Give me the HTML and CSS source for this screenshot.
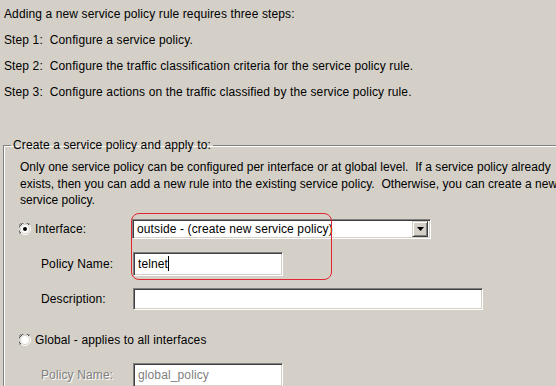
FILE: index.html
```html
<!DOCTYPE html>
<html>
<head>
<meta charset="utf-8">
<link rel="stylesheet" href="styles.css">
</head>
<body>
<div class="page">
  <div class="intro">
    <p>Adding a new service policy rule requires three steps:</p>
    <p>Step 1:&nbsp; Configure a service policy.</p>
    <p>Step 2:&nbsp; Configure the traffic classification criteria for the service policy rule.</p>
    <p>Step 3:&nbsp; Configure actions on the traffic classified by the service policy rule.</p>
  </div>
  <fieldset class="group">
    <legend class="group-title">Create a service policy and apply to:</legend>
    <p class="note">Only one service policy can be configured per interface or at global level.&nbsp; If a service policy already<br>exists, then you can add a new rule into the existing service policy.&nbsp; Otherwise, you can create a new<br>service policy.</p>
    <div class="form">
      <div class="highlight"></div>
      <div class="row row-iface">
        <label class="radio-label">
          <svg class="radio" width="12" height="12" viewBox="0 0 12 12">
            <circle cx="6" cy="6" r="5.5" fill="none" stroke="#ffffff"/>
            <path d="M1.2 10.8 A5.5 5.5 0 0 1 1.2 1.2 A5.5 5.5 0 0 1 10.8 1.2" fill="none" stroke="#808080"/>
            <path d="M2 10 A4.5 4.5 0 0 1 2 2 A4.5 4.5 0 0 1 10 2" fill="none" stroke="#404040"/>
            <circle cx="6" cy="6" r="4" fill="#ffffff"/>
            <circle cx="6" cy="6" r="2" fill="#000000"/>
          </svg>
          <span>Interface:</span>
        </label>
        <div class="select">
          <span class="select-text">outside - (create new service policy)</span>
          <span class="select-btn">
            <svg width="7" height="4" viewBox="0 0 7 4"><path d="M0 0H7L3.5 4Z" fill="#000"/></svg>
          </span>
        </div>
      </div>
      <div class="row row-name">
        <span class="label">Policy Name:</span>
        <div class="field field-short"><span>telnet</span><span class="caret"></span></div>
      </div>
      <div class="row row-desc">
        <span class="label">Description:</span>
        <div class="field field-long"></div>
      </div>
      <div class="row row-global">
        <label class="radio-label">
          <svg class="radio" width="12" height="12" viewBox="0 0 12 12">
            <circle cx="6" cy="6" r="5.5" fill="none" stroke="#ffffff"/>
            <path d="M1.2 10.8 A5.5 5.5 0 0 1 1.2 1.2 A5.5 5.5 0 0 1 10.8 1.2" fill="none" stroke="#808080"/>
            <path d="M2 10 A4.5 4.5 0 0 1 2 2 A4.5 4.5 0 0 1 10 2" fill="none" stroke="#404040"/>
            <circle cx="6" cy="6" r="4" fill="#ffffff"/>
          </svg>
          <span>Global - applies to all interfaces</span>
        </label>
      </div>
      <div class="row row-gname">
        <span class="label disabled">Policy Name:</span>
        <div class="field field-short field-disabled"><span>global_policy</span></div>
      </div>
    </div>
  </fieldset>
</div>
</body>
</html>
```

FILE: styles.css
```css
html, body {
  margin: 0;
  padding: 0;
  background: #d4d0c8;
  overflow: hidden;
}
body {
  font-family: "Liberation Sans", Arial, sans-serif;
  font-size: 12px;
  letter-spacing: 0.12px;
  color: #000;
}
.page {
  width: 620px;
  padding-left: 4px;
}
.intro {
  display: flex;
  flex-direction: column;
  gap: 11px;
  padding-top: 7px;
}
.intro p {
  margin: 0;
  line-height: 15px;
  white-space: nowrap;
}
.group {
  margin: 38px 0 0 -1px;
  padding: 6px 0 40px 16px;
  border: 1px solid #808080;
  box-shadow: inset 1px 1px 0 #ffffff, 1px 1px 0 #ffffff;
  width: 640px;
}
.group-title {
  padding: 0 2px;
  margin-left: -9px;
  line-height: 15px;
}
.note {
  margin: 0;
  line-height: 16.5px;
  letter-spacing: 0.03px;
  white-space: pre;
}
.form {
  position: relative;
  margin-top: 10px;
}
.highlight {
  position: absolute;
  left: 111px;
  top: -6px;
  width: 199px;
  height: 65px;
  border: 1px solid #e0262e;
  border-radius: 8px;
  pointer-events: none;
}
.row {
  display: flex;
  align-items: center;
}
.row-iface { height: 20px; }
.row-name { height: 24px; margin-top: 13px; }
.row-desc { height: 22px; margin-top: 12px; }
.row-global { height: 16px; margin-top: 22px; }
.row-gname { height: 24px; margin-top: 15px; }

.radio-label {
  display: flex;
  align-items: center;
  width: 113px;
  margin-left: -1px;
}
.radio {
  margin-right: 4px;
  flex: none;
}
.row-global .radio-label { width: auto; }
.label {
  width: 92px;
  padding-left: 21px;
}
.label.disabled {
  color: #808080;
  text-shadow: 1px 1px 0 #ffffff;
}
.select, .field {
  box-sizing: border-box;
  background: #ffffff;
  border-top: 1px solid #808080;
  border-left: 1px solid #808080;
  border-right: 1px solid #ffffff;
  border-bottom: 1px solid #ffffff;
  box-shadow: inset 1px 1px 0 #404040, inset -1px -1px 0 #d4d0c8;
  display: flex;
  align-items: center;
}
.select {
  width: 299px;
  height: 20px;
  padding: 2px 2px 2px 4px;
}
.select-text {
  flex: 1;
}
.select-btn {
  box-sizing: border-box;
  width: 16px;
  height: 16px;
  background: #d4d0c8;
  border-top: 1px solid #d4d0c8;
  border-left: 1px solid #d4d0c8;
  border-right: 1px solid #404040;
  border-bottom: 1px solid #404040;
  box-shadow: inset 1px 1px 0 #ffffff, inset -1px -1px 0 #808080;
  display: flex;
  align-items: center;
  justify-content: center;
}
.field {
  padding-left: 4px;
}
.field-short {
  width: 150px;
  height: 24px;
}
.field-long {
  width: 350px;
  height: 22px;
}
.field-disabled {
  color: #808080;
}
.caret {
  display: inline-block;
  width: 1px;
  height: 15px;
  background: #000;
}
```
